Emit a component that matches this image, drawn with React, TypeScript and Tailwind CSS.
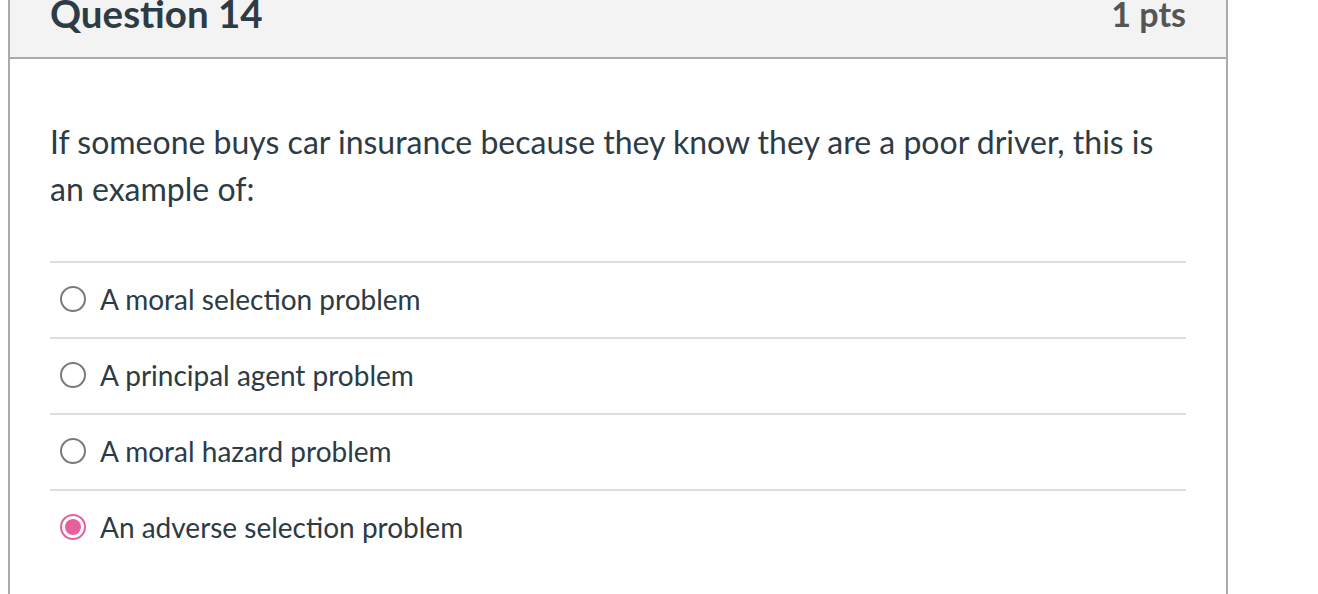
const options = [
  { id: "a", label: "A moral selection problem" },
  { id: "b", label: "A principal agent problem" },
  { id: "c", label: "A moral hazard problem" },
  { id: "d", label: "An adverse selection problem" },
];

function Radio({ checked }: { checked: boolean }) {
  if (checked) {
    return (
      <span className="flex h-[26px] w-[26px] shrink-0 items-center justify-center rounded-full border-2 border-[#e5609c]">
        <span className="h-[16px] w-[16px] rounded-full bg-[#e5609c]" />
      </span>
    );
  }
  return (
    <span className="h-[26px] w-[26px] shrink-0 rounded-full border-2 border-[#7a7a7a]" />
  );
}

export default function App() {
  const selected = "d";

  return (
    <div className="h-[594px] w-[1318px] overflow-hidden bg-white font-['Lato',sans-serif] text-[#2d3b45]">
      <div className="ml-[8px] -mt-[25px] w-[1220px] border-x-2 border-[#aaaaaa]">
        <div className="flex items-center justify-between border-b-2 border-[#aaaaaa] bg-[#f3f3f3] pl-[40px] pr-[40px] pt-[16px] pb-[21px]">
          <h2 className="text-[38.5px] font-bold leading-[45px]">Question 14</h2>
          <span className="text-[34px] font-bold leading-[45px] text-[#555555]">1 pts</span>
        </div>
        <div className="px-[40px] pt-[59px] pb-[40px]">
          <p className="text-[32px] leading-[47px]">
            If someone buys car insurance because they know they are a poor driver, this is
            <br />
            an example of:
          </p>
          <div className="mt-[49px]">
            {options.map((o) => (
              <label
                key={o.id}
                className="flex h-[76px] items-center gap-[14px] border-t-2 border-[#dddddd] pb-[2px] pl-[10px] text-[28px]"
              >
                <Radio checked={o.id === selected} />
                <span>{o.label}</span>
              </label>
            ))}
          </div>
        </div>
      </div>
    </div>
  );
}
